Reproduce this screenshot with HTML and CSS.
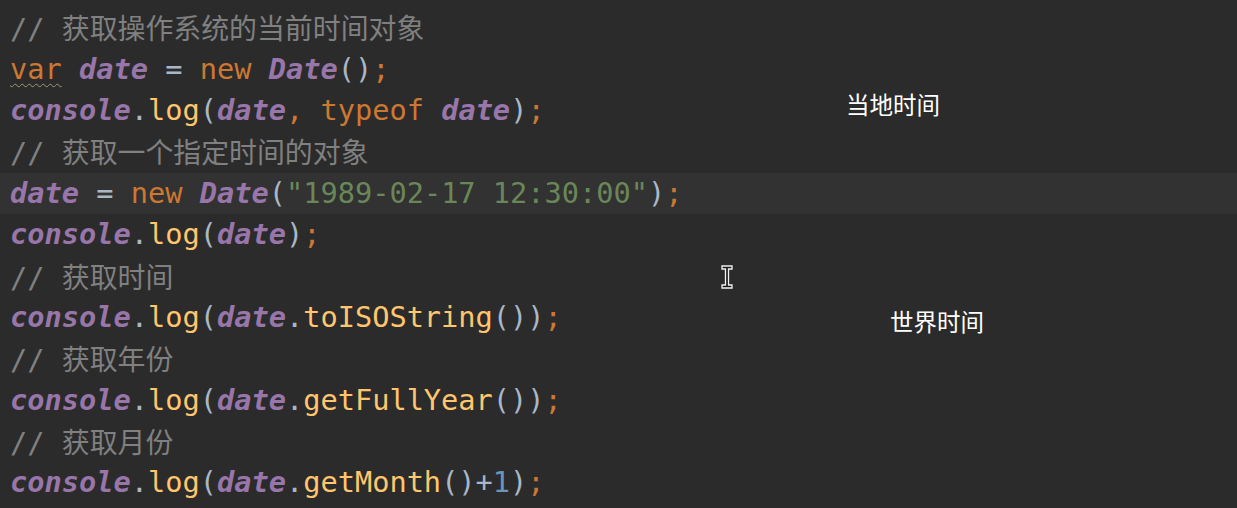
FILE: index.html
```html
<!DOCTYPE html>
<html lang="zh">
<head>
<meta charset="utf-8">
<title>Date</title>
<link rel="stylesheet" href="styles.css">
</head>
<body>
<div class="editor">
  <div class="code">
    <div class="line"><span class="sp">     </span><span class="kw">;</span></div>
    <div class="line"><span class="cm">// <span class="cjk">获取操作系统的当前时间对象</span></span></div>
    <div class="line"><span class="kw warn">var</span> <span class="gv">date</span> = <span class="kw">new</span> <span class="gv">Date</span>()<span class="kw">;</span></div>
    <div class="line"><span class="gv">console</span>.<span class="fn">log</span>(<span class="gv">date</span><span class="kw">,</span> <span class="kw">typeof</span> <span class="gv">date</span>)<span class="kw">;</span></div>
    <div class="line"><span class="cm">// <span class="cjk">获取一个指定时间的对象</span></span></div>
    <div class="line current"><span class="gv">date</span> = <span class="kw">new</span> <span class="gv">Date</span>(<span class="str">"1989-02-17 12:30:00"</span>)<span class="kw">;</span></div>
    <div class="line"><span class="gv">console</span>.<span class="fn">log</span>(<span class="gv">date</span>)<span class="kw">;</span></div>
    <div class="line"><span class="cm">// <span class="cjk">获取时间</span></span></div>
    <div class="line"><span class="gv">console</span>.<span class="fn">log</span>(<span class="gv">date</span>.<span class="fn">toISOString</span>())<span class="kw">;</span></div>
    <div class="line"><span class="cm">// <span class="cjk">获取年份</span></span></div>
    <div class="line"><span class="gv">console</span>.<span class="fn">log</span>(<span class="gv">date</span>.<span class="fn">getFullYear</span>())<span class="kw">;</span></div>
    <div class="line"><span class="cm">// <span class="cjk">获取月份</span></span></div>
    <div class="line"><span class="gv">console</span>.<span class="fn">log</span>(<span class="gv">date</span>.<span class="fn">getMonth</span>()+<span class="num">1</span>)<span class="kw">;</span></div>
  </div>
  <div class="note note-local">当地时间</div>
  <div class="note note-world">世界时间</div>
  <svg class="ibeam" width="12" height="24" viewBox="0 0 12 24">
    <path d="M1 1h10v3H7.5v16H11v3H1v-3h3.5V4H1z" fill="#1a1a1a" stroke="#f2f2f2" stroke-width="1.3" stroke-linejoin="miter"/>
  </svg>
</div>
</body>
</html>
```
FILE: styles.css
```css
html, body {
  margin: 0;
  padding: 0;
  background: #2b2b2b;
  width: 1237px;
  height: 508px;
  overflow: hidden;
}
.editor {
  position: relative;
  width: 1237px;
  height: 508px;
  background: #2b2b2b;
  overflow: hidden;
}
.code {
  margin-top: -34px;
  font-family: "DejaVu Sans Mono", "Noto Sans CJK SC", monospace;
  font-size: 28.65px;
  color: #a9b7c6;
}
.line {
  height: 41.36px;
  line-height: 41.36px;
  padding-left: 10px;
  white-space: pre;
}
.line.current {
  background: #323232;
}
.cm { color: #808080; }
.cjk {
  font-family: "Noto Sans CJK SC", sans-serif;
  font-size: 27.9px;
}
.kw { color: #cc7832; }
.gv {
  color: #9876aa;
  font-style: italic;
  font-weight: bold;
}
.fn { color: #ffc66d; }
.str { color: #6a8759; }
.num { color: #6897bb; }
.warn {
  text-decoration: underline wavy #9c9874;
  text-decoration-thickness: 1px;
  text-underline-offset: 4px;
}
.note {
  position: absolute;
  font-family: "Noto Sans CJK SC", sans-serif;
  font-size: 23.5px;
  line-height: 30px;
  color: #ffffff;
}
.note-local { left: 846px; top: 89px; }
.note-world { left: 890px; top: 306px; }
.ibeam {
  position: absolute;
  left: 721px;
  top: 265px;
}
```
